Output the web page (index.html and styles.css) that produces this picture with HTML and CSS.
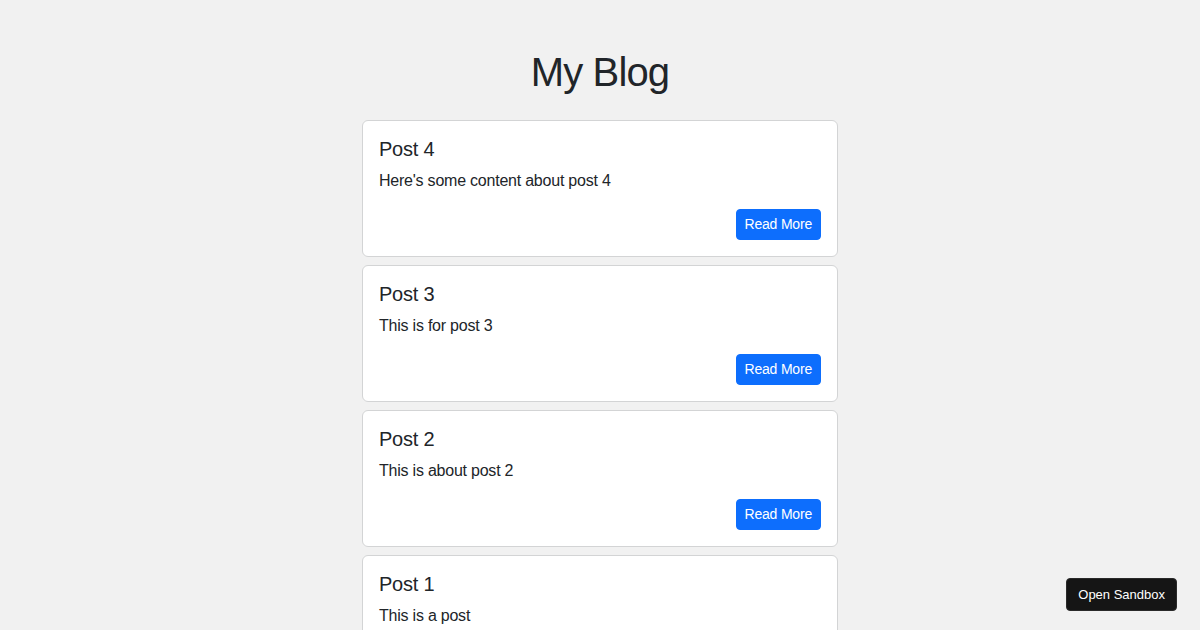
FILE: index.html
```html
<!DOCTYPE html>
<html lang="en">
<head>
<meta charset="utf-8">
<title>My Blog</title>
<link rel="stylesheet" href="styles.css">
</head>
<body>
<main class="page">
  <h1 class="title">My Blog</h1>
  <div class="posts">
    <article class="card">
      <h5 class="card-title">Post 4</h5>
      <p class="card-text">Here's some content about post 4</p>
      <div class="card-actions"><button class="btn">Read More</button></div>
    </article>
    <article class="card">
      <h5 class="card-title">Post 3</h5>
      <p class="card-text">This is for post 3</p>
      <div class="card-actions"><button class="btn">Read More</button></div>
    </article>
    <article class="card">
      <h5 class="card-title">Post 2</h5>
      <p class="card-text">This is about post 2</p>
      <div class="card-actions"><button class="btn">Read More</button></div>
    </article>
    <article class="card">
      <h5 class="card-title">Post 1</h5>
      <p class="card-text">This is a post</p>
      <div class="card-actions"><button class="btn">Read More</button></div>
    </article>
  </div>
</main>
<a class="sandbox-btn" href="#">Open Sandbox</a>
</body>
</html>
```
FILE: styles.css
```css
* { box-sizing: border-box; }
html, body { margin: 0; padding: 0; }
body {
  background: #f1f1f1;
  font-family: "Liberation Sans", Arial, sans-serif;
  color: #212529;
  font-size: 16px;
  line-height: 1.5;
  letter-spacing: -0.014em;
}
.page {
  display: flex;
  flex-direction: column;
  align-items: center;
  padding-top: 48px;
}
.title {
  margin: 0 0 24px;
  font-size: 40px;
  font-weight: 400;
  line-height: 1.2;
  letter-spacing: -0.022em;
}
.posts {
  width: 476px;
  display: flex;
  flex-direction: column;
  gap: 8px;
}
.card {
  background: #fff;
  border: 1px solid #d3d4d5;
  border-radius: 6px;
  padding: 16px;
}
.card-title {
  margin: 0 0 8px;
  font-size: 20px;
  font-weight: 400;
  line-height: 1.2;
}
.card-text {
  margin: 0 0 16px;
}
.card-actions {
  display: flex;
  justify-content: flex-end;
}
.btn {
  background: #0d6efd;
  color: #fff;
  border: 1px solid #0d6efd;
  border-radius: 4px;
  padding: 4px 8px;
  font-family: inherit;
  font-size: 14px;
  line-height: 1.5;
  letter-spacing: -0.014em;
  cursor: pointer;
}
.sandbox-btn {
  position: fixed;
  right: 23px;
  bottom: 19px;
  background: #151515;
  color: #fff;
  text-decoration: none;
  font-family: "Liberation Sans", Arial, sans-serif;
  font-size: 13px;
  line-height: 1;
  letter-spacing: 0;
  padding: 9px 11px;
  border-radius: 4px;
  border: 1px solid #2a2a2a;
}
```
